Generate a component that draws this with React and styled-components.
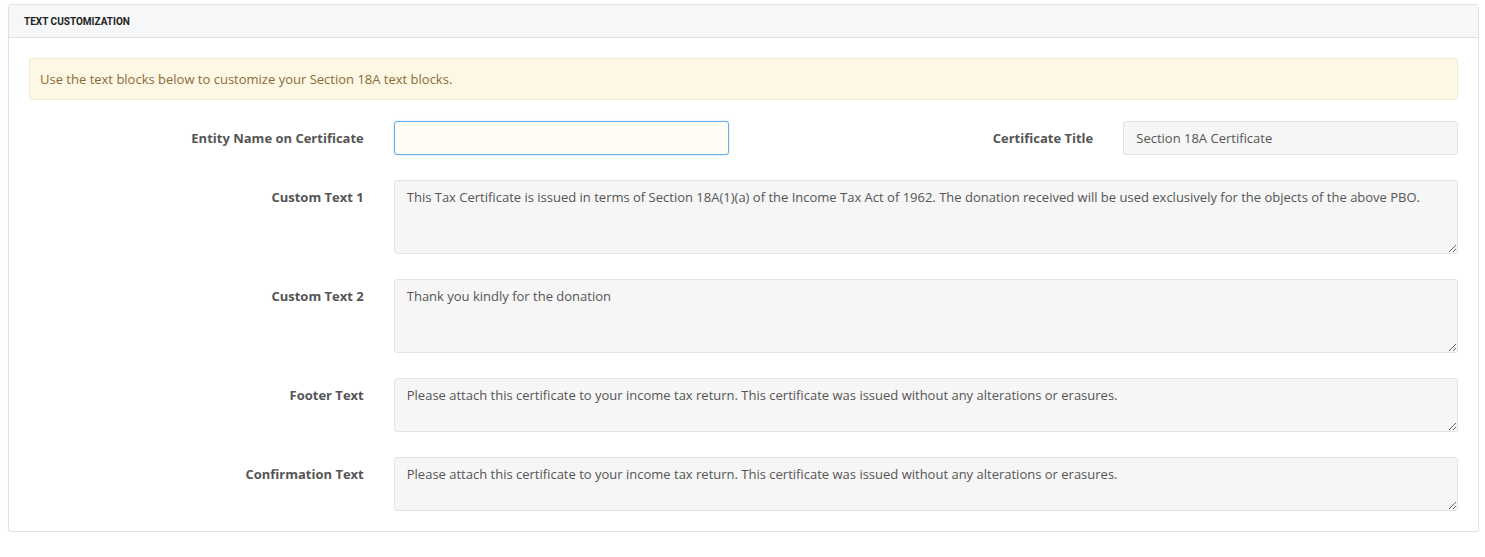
import React from "react";
import styled, { createGlobalStyle } from "styled-components";

const Global = createGlobalStyle`
  body { margin: 0; background: #fff; font-family: "Open Sans", sans-serif; }
`;

const Page = styled.div`
  padding: 4px 6px 0 8px;
`;

const Panel = styled.div`
  border: 1px solid #dfe3e6;
  border-radius: 3px;
  background: #fff;
  box-shadow: 0 1px 2px rgba(0, 0, 0, 0.05);
`;

const PanelHeader = styled.div`
  height: 32px;
  display: flex;
  align-items: center;
  padding: 0 15px;
  background: #f6f7f8;
  border-bottom: 1px solid #dfe3e6;
  font-family: Roboto, sans-serif;
  font-weight: 700;
  font-size: 10px;
  color: #222;
  text-transform: uppercase;
`;

const PanelBody = styled.div`
  padding: 20px 20px 20px 20px;
`;

const Alert = styled.div`
  background: #fdf7e3;
  border: 1px solid #f2ead0;
  border-radius: 3px;
  color: #8a6d3b;
  font-size: 13px;
  padding: 11px 10px;
  margin-bottom: 21px;
`;

const FormGrid = styled.div`
  display: grid;
  grid-template-columns: repeat(4, 1fr);
  column-gap: 30px;
  row-gap: 25px;
`;

const Label = styled.label`
  text-align: right;
  font-weight: 700;
  font-size: 13px;
  color: #555;
  padding-top: ${(p) => (p.$area ? "8px" : "0")};
  align-self: ${(p) => (p.$area ? "start" : "center")};
`;

const Input = styled.input`
  box-sizing: border-box;
  height: 34px;
  width: 100%;
  padding: 6px 12px;
  font-family: "Open Sans", sans-serif;
  font-size: 13px;
  color: #555;
  border: 1px solid ${(p) => (p.$focus ? "#66afe9" : "#e3e3e3")};
  border-radius: 3px;
  background: ${(p) => (p.$focus ? "#fffdf3" : "#f6f6f6")};
  box-shadow: ${(p) => (p.$focus ? "0 0 2px rgba(102,175,233,.5)" : "none")};
  outline: none;
`;

const TextArea = styled.textarea`
  grid-column: span 3;
  box-sizing: border-box;
  height: ${(p) => p.$h}px;
  width: 100%;
  padding: 7px 12px;
  font-family: "Open Sans", sans-serif;
  font-size: 13px;
  line-height: 1.5;
  color: #555;
  border: 1px solid #e3e3e3;
  border-radius: 3px;
  background: #f6f6f6;
  resize: vertical;
  outline: none;
`;

const attach =
  "Please attach this certificate to your income tax return. This certificate was issued without any alterations or erasures.";

const areas = [
  ["Custom Text 1", "This Tax Certificate is issued in terms of Section 18A(1)(a) of the Income Tax Act of 1962. The donation received will be used exclusively for the objects of the above PBO.", 74],
  ["Custom Text 2", "Thank you kindly for the donation", 74],
  ["Footer Text", attach, 54],
  ["Confirmation Text", attach, 54],
];

export default function App() {
  return (
    <Page>
      <Global />
      <Panel>
        <PanelHeader>Text Customization</PanelHeader>
        <PanelBody>
          <Alert>Use the text blocks below to customize your Section 18A text blocks.</Alert>
          <FormGrid>
            <Label>Entity Name on Certificate</Label>
            <Input $focus defaultValue="" autoFocus />
            <Label>Certificate Title</Label>
            <Input defaultValue="Section 18A Certificate" />
            {areas.map(([label, text, h]) => (
              <React.Fragment key={label}>
                <Label $area>{label}</Label>
                <TextArea $h={h} defaultValue={text} />
              </React.Fragment>
            ))}
          </FormGrid>
        </PanelBody>
      </Panel>
    </Page>
  );
}
